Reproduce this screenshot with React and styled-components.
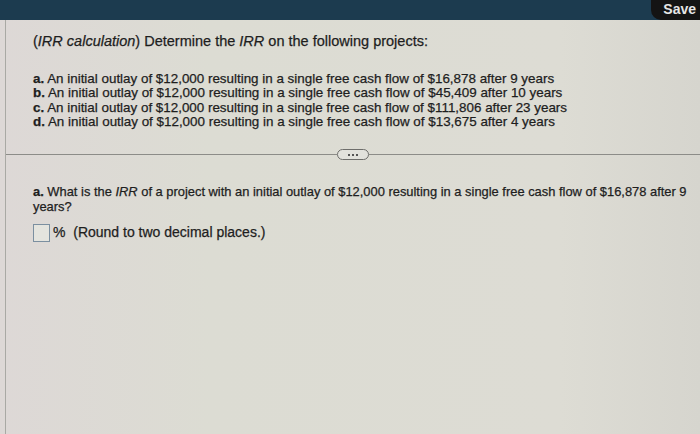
import React from 'react';
import styled, { createGlobalStyle } from 'styled-components';

const GlobalStyle = createGlobalStyle`
  html, body {
    margin: 0;
    padding: 0;
    background: #dcdcd4;
  }
`;

const Page = styled.div`
  width: 700px;
  height: 434px;
  overflow: hidden;
  background: linear-gradient(90deg, #ddd8d6 0%, #dcdcd3 30%, #dddcd4 80%, #d6d5ce 100%);
  font-family: "Liberation Sans", Arial, sans-serif;
  color: #1e1e1e;
  display: flex;
  flex-direction: column;
`;

const TopBar = styled.div`
  height: 20px;
  flex: none;
  background: #1c3b4f;
  display: flex;
  justify-content: flex-end;
  align-items: flex-start;
`;

const SaveButton = styled.div`
  background: #141414;
  color: #e6e6e6;
  font-weight: bold;
  font-size: 14px;
  padding: 1px 4px 3px 12px;
  border-radius: 0 0 0 10px;
`;

const Frame = styled.div`
  flex: 1;
  margin-left: 5px;
  border-left: 1px solid #a9a9a4;
  display: flex;
  flex-direction: column;
`;

const Body = styled.div`
  padding-left: 27px;
  font-size: 13.4px;
  -webkit-text-stroke: 0.25px #1e1e1e;
`;

const Title = styled.div`
  margin-top: 13px;
  font-size: 14.5px;
  line-height: 16px;
`;

const ItemList = styled.div`
  margin-top: 23px;
  display: flex;
  flex-direction: column;
`;

const Item = styled.div`
  line-height: 14.4px;
`;

const Divider = styled.div`
  margin-top: 19px;
  height: 12px;
  display: flex;
  align-items: center;
  &::before, &::after {
    content: "";
    flex: 1;
    height: 1px;
    background: #8c8c88;
  }
`;

const MoreButton = styled.div`
  width: 30px;
  height: 9px;
  border: 1px solid #6e6e6b;
  border-radius: 6px;
  background: #e2e2dc;
  display: flex;
  align-items: center;
  justify-content: center;
  gap: 2px;
`;

const Dot = styled.span`
  width: 2px;
  height: 2px;
  background: #555;
`;

const Question = styled(Body)`
  margin-top: 23px;
  font-size: 12.9px;
  line-height: 15px;
`;

const AnswerRow = styled.div`
  margin-top: 10px;
  display: flex;
  align-items: center;
  gap: 3px;
  font-size: 14px;
  white-space: pre;
`;

const AnswerBox = styled.div`
  width: 15px;
  height: 16px;
  border: 1px solid #7b8fa0;
  background: #e4e4de;
`;

export default function App() {
  const items = [
    ['a.', '$16,878', '9'],
    ['b.', '$45,409', '10'],
    ['c.', '$111,806', '23'],
    ['d.', '$13,675', '4'],
  ];
  return (
    <>
      <GlobalStyle />
      <Page>
        <TopBar>
          <SaveButton>Save</SaveButton>
        </TopBar>
        <Frame>
          <Body>
            <Title>
              (<i>IRR calculation</i>) Determine the <i>IRR</i> on the following projects:
            </Title>
            <ItemList>
              {items.map(([letter, cash, years]) => (
                <Item key={letter}>
                  <b>{letter}</b> An initial outlay of $12,000 resulting in a single free cash flow of {cash} after {years} years
                </Item>
              ))}
            </ItemList>
          </Body>
          <Divider>
            <MoreButton>
              <Dot />
              <Dot />
              <Dot />
            </MoreButton>
          </Divider>
          <Question>
            <div>
              <b>a.</b> What is the <i>IRR</i> of a project with an initial outlay of $12,000 resulting in a single free cash flow of $16,878 after 9 years?
            </div>
            <AnswerRow>
              <AnswerBox />
              <span>%  (Round to two decimal places.)</span>
            </AnswerRow>
          </Question>
        </Frame>
      </Page>
    </>
  );
}
